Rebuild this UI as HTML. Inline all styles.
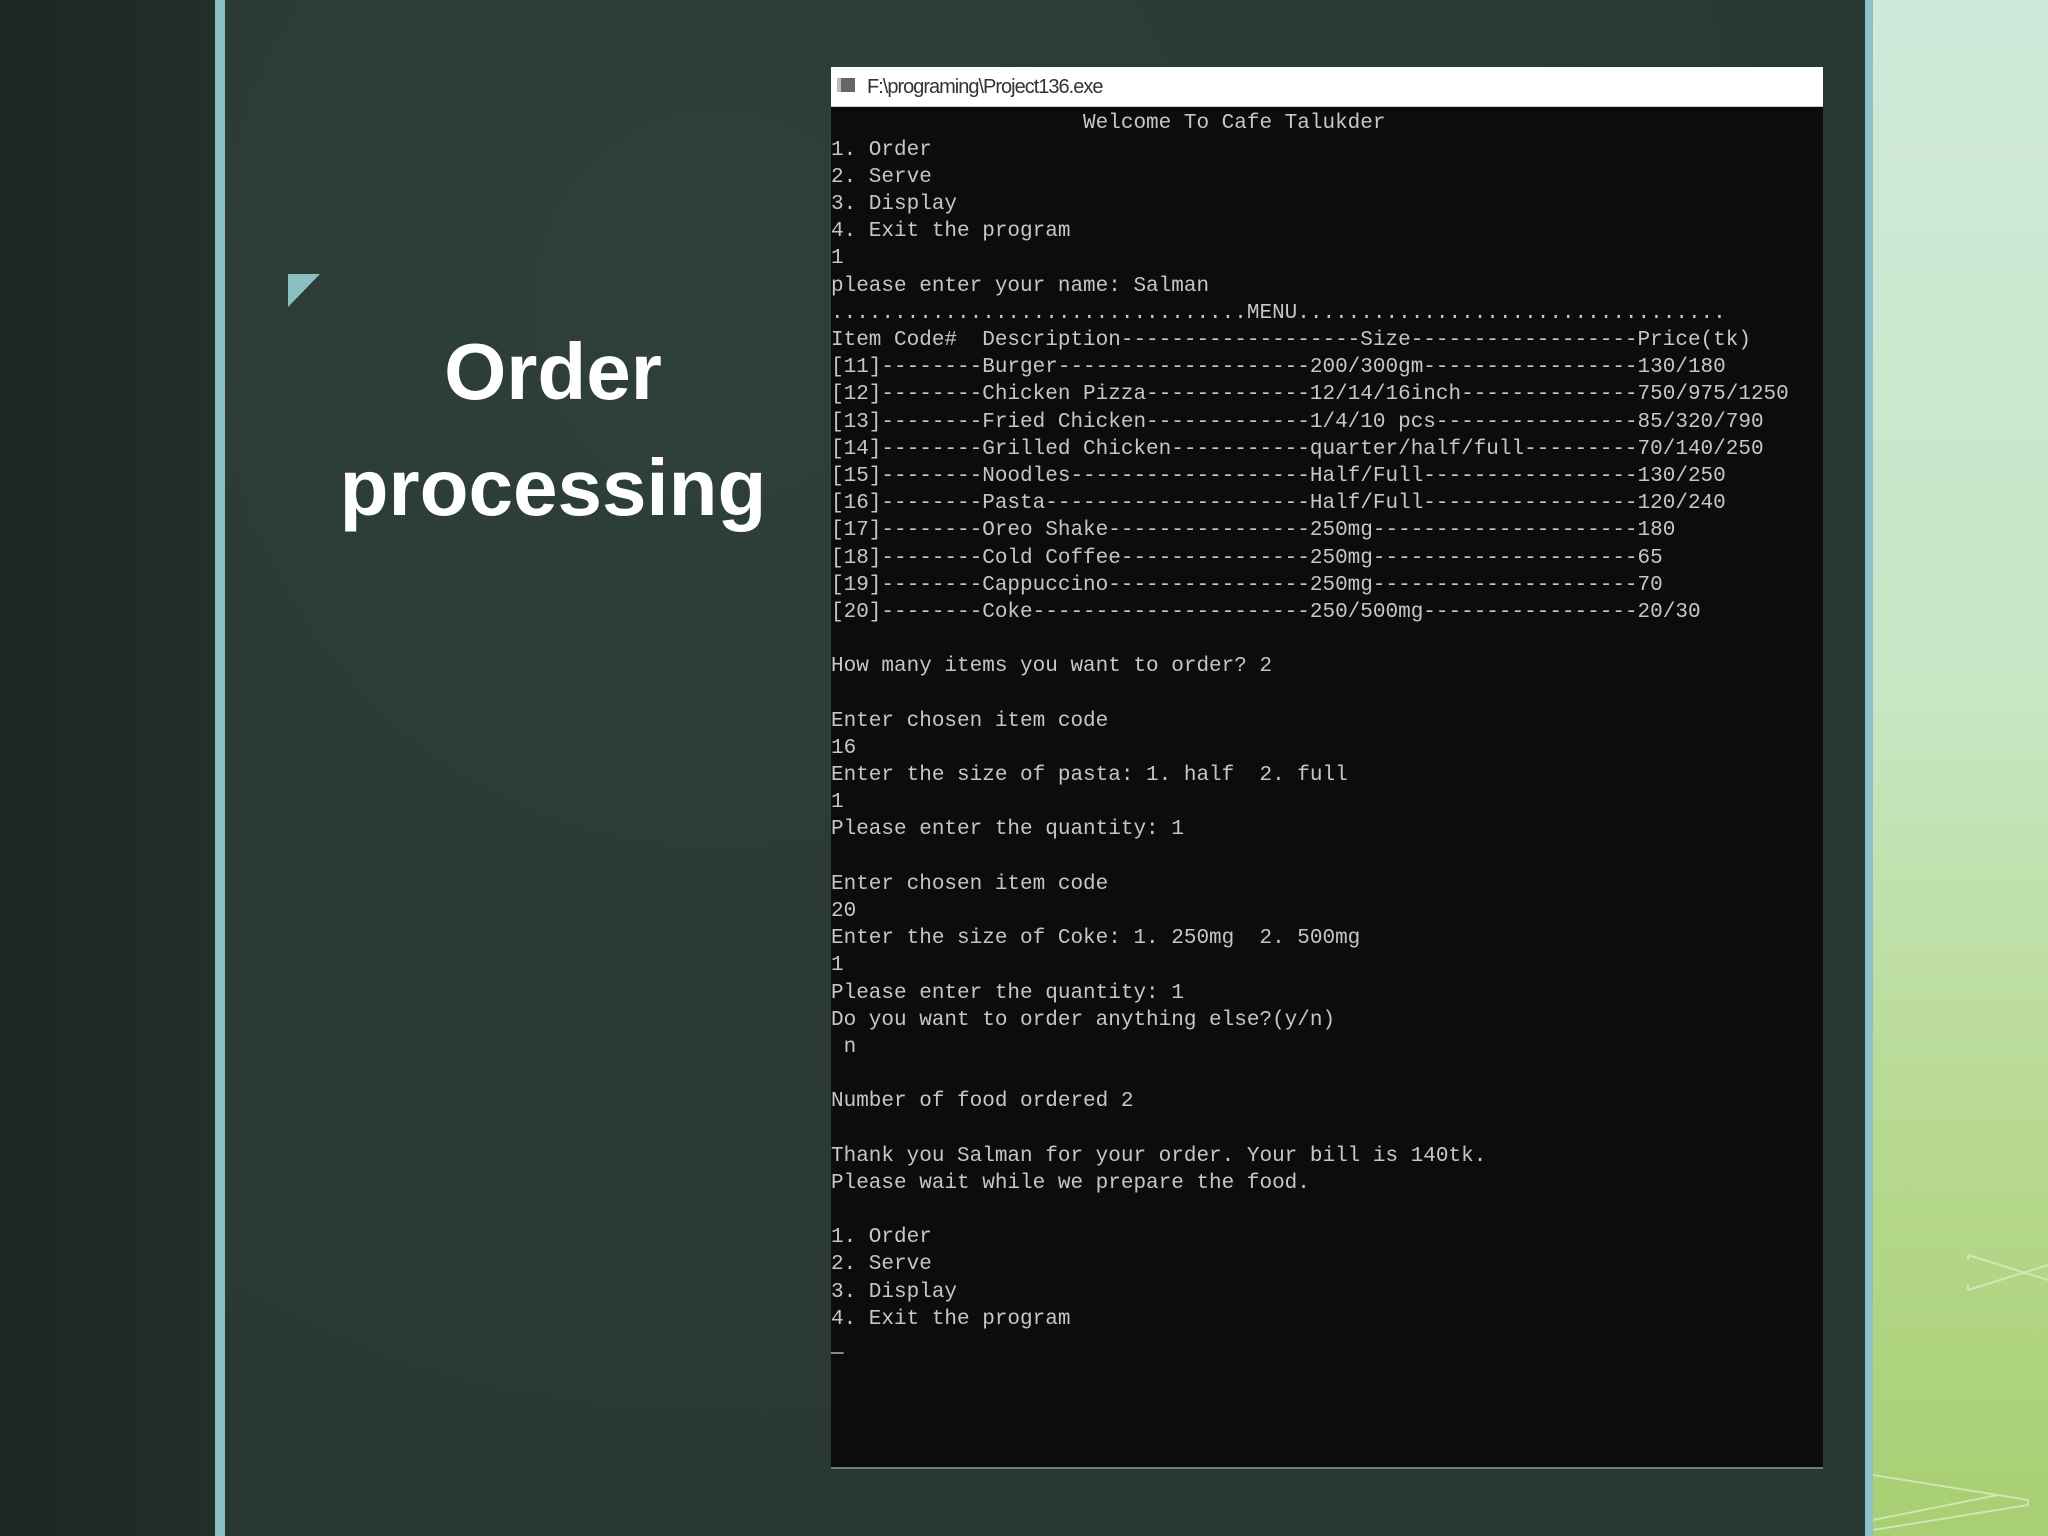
<!DOCTYPE html>
<html><head><meta charset="utf-8"><style>
html,body{margin:0;padding:0}
body{width:2048px;height:1536px;position:relative;overflow:hidden;background:#2a3a34;font-family:"Liberation Sans",sans-serif}
.left{position:absolute;left:0;top:0;width:215px;height:1536px;background:linear-gradient(90deg,#1c2724,#212e2a)}
.bar1{position:absolute;left:215px;top:0;width:10px;height:1536px;background:#8bbfc2}
.panel{position:absolute;left:225px;top:0;width:1640px;height:1536px;background:radial-gradient(ellipse at 30% 20%,#2e4038,#293832 70%)}
.bar2{position:absolute;left:1865px;top:0;width:8px;height:1536px;background:#8fc0c6}
.green{position:absolute;left:1873px;top:0;width:175px;height:1536px;background:linear-gradient(180deg,#cfe9da 0%,#c8e6c4 45%,#b6d98e 75%,#a8cf72 100%)}
.tri{position:absolute;left:288px;top:274px;width:0;height:0;border-top:33px solid #8bbfc2;border-right:32px solid transparent}
.h{position:absolute;left:300px;width:506px;text-align:center;color:#fff;font-weight:bold;font-size:80px;line-height:1}
.term{position:absolute;left:831px;top:67px;width:992px;height:1400px;background:#0c0c0c;border-bottom:2px solid #777}
.tb{position:absolute;left:0;top:0;width:992px;height:39px;background:#fff;border-bottom:1px solid #ccc}
.tb span{position:absolute;left:36px;top:9px;font-size:20px;color:#333;letter-spacing:-1px}
.tb i{position:absolute;left:6px;top:11px;width:14px;height:14px;background:#666;border-left:4px solid #bbb}
pre{position:absolute;left:0;top:42.5px;margin:0;font-family:"Liberation Mono",monospace;font-size:21px;line-height:27.19px;color:#c6c6c6;white-space:pre}
</style></head><body>
<div class="left"></div><div class="bar1"></div><div class="panel"></div><div class="bar2"></div>
<div class="green">
<svg width="175" height="1536" style="position:absolute;left:0;top:0"><g fill="none" stroke="#e0f0c8" stroke-width="2" opacity="0.7"><path d="M95 1255 L175 1280 M95 1290 L175 1265 M95 1255 L95 1260 M95 1290 L95 1285"/><path d="M0 1475 L125 1495 L0 1520 M125 1495 L155 1500 L155 1505 L0 1530"/></g></svg>
</div>
<div class="tri"></div>
<div class="h" style="top:332px">Order</div>
<div class="h" style="top:448px">processing</div>
<div class="term">
<div class="tb"><i></i><span>F:\programing\Project136.exe</span></div>
<pre>                    Welcome To Cafe Talukder
1. Order
2. Serve
3. Display
4. Exit the program
1
please enter your name: Salman
.................................MENU..................................
Item Code#  Description-------------------Size------------------Price(tk)
[11]--------Burger--------------------200/300gm-----------------130/180
[12]--------Chicken Pizza-------------12/14/16inch--------------750/975/1250
[13]--------Fried Chicken-------------1/4/10 pcs----------------85/320/790
[14]--------Grilled Chicken-----------quarter/half/full---------70/140/250
[15]--------Noodles-------------------Half/Full-----------------130/250
[16]--------Pasta---------------------Half/Full-----------------120/240
[17]--------Oreo Shake----------------250mg---------------------180
[18]--------Cold Coffee---------------250mg---------------------65
[19]--------Cappuccino----------------250mg---------------------70
[20]--------Coke----------------------250/500mg-----------------20/30

How many items you want to order? 2

Enter chosen item code
16
Enter the size of pasta: 1. half  2. full
1
Please enter the quantity: 1

Enter chosen item code
20
Enter the size of Coke: 1. 250mg  2. 500mg
1
Please enter the quantity: 1
Do you want to order anything else?(y/n)
 n

Number of food ordered 2

Thank you Salman for your order. Your bill is 140tk.
Please wait while we prepare the food.

1. Order
2. Serve
3. Display
4. Exit the program
<span style="color:#fff">_</span></pre>
</div>
</body></html>
